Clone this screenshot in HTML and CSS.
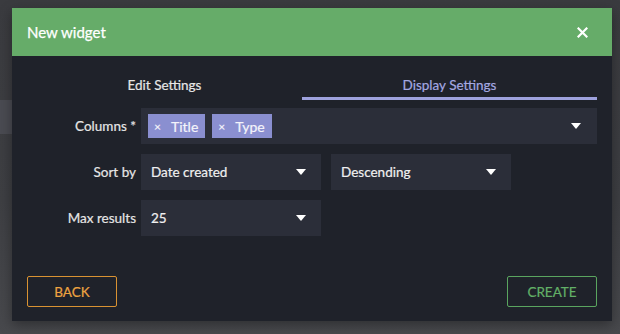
FILE: index.html
```html
<!DOCTYPE html>
<html>
<head>
<meta charset="utf-8">
<link rel="stylesheet" href="styles.css">
</head>
<body>
<div class="backdrop">
  <div class="band"></div>
</div>
<div class="modal">
  <div class="header">
    <span class="title">New widget</span>
    <svg class="close" width="11" height="11" viewBox="0 0 11 11"><path d="M1.5 1.5 L9.5 9.5 M9.5 1.5 L1.5 9.5" stroke="#fff" stroke-width="2.2" stroke-linecap="square"/></svg>
  </div>
  <div class="tabs">
    <div class="tab">Edit Settings</div>
    <div class="tab active">Display Settings</div>
  </div>
  <div class="form">
    <div class="row">
      <label class="label">Columns *</label>
      <div class="field wide">
        <div class="chips">
          <span class="chip"><span class="x">×</span>Title</span>
          <span class="chip"><span class="x">×</span>Type</span>
        </div>
        <span class="caret"></span>
      </div>
    </div>
    <div class="row">
      <label class="label">Sort by</label>
      <div class="field sel"><span>Date created</span><span class="caret"></span></div>
      <div class="field sel"><span>Descending</span><span class="caret"></span></div>
    </div>
    <div class="row">
      <label class="label">Max results</label>
      <div class="field sel"><span>25</span><span class="caret"></span></div>
    </div>
  </div>
  <div class="footer">
    <button class="btn back">BACK</button>
    <button class="btn create">CREATE</button>
  </div>
</div>
</body>
</html>
```
FILE: styles.css
```css
* { box-sizing: border-box; }
html, body { margin: 0; padding: 0; }
body {
  width: 620px;
  height: 334px;
  overflow: hidden;
  background: linear-gradient(#3a3b3f 0%, #3e3f43 60%, #48494d 100%);
  font-family: "Lato", "Liberation Sans", sans-serif;
  position: relative;
  -webkit-font-smoothing: antialiased;
}
.backdrop { position: absolute; inset: 0; }
.band {
  position: absolute;
  left: 0; top: 100px; width: 20px; height: 34px;
  background: #4a4b52;
}
.modal {
  position: absolute;
  left: 12px; top: 8px;
  width: 600px; height: 313px;
  background: #1f222a;
  display: flex;
  flex-direction: column;
  box-shadow: 0 4px 12px rgba(0,0,0,0.35);
}
.header {
  height: 48px;
  background: #66ac69;
  display: flex;
  align-items: center;
  justify-content: space-between;
  padding: 0 24px 0 15px;
}
.title { color: #fff; font-size: 15px; -webkit-text-stroke: 0.25px #fff; }
.close { display: block; }
.tabs {
  display: grid;
  grid-template-columns: 275px 1fr;
  margin: 0 15px;
  height: 44px;
}
.tab {
  text-align: center;
  color: #e6e6e6;
  font-size: 13.5px;
  padding-top: 21px;
  -webkit-text-stroke: 0.2px currentColor;
}
.tab.active {
  color: #a4a8e2;
  border-bottom: 3px solid #9ea2dd;
}
.form {
  display: flex;
  flex-direction: column;
  gap: 10px;
  padding: 8px 15px 0 0;
}
.row {
  display: flex;
  gap: 5px;
  height: 36px;
  align-items: stretch;
}
.label {
  width: 124px;
  text-align: right;
  color: #e6e6e6;
  font-size: 13.5px;
  display: flex;
  align-items: center;
  justify-content: flex-end;
  -webkit-text-stroke: 0.2px currentColor;
}
.field {
  background: #2b2e39;
  display: flex;
  align-items: center;
  justify-content: space-between;
  color: #f0f0f0;
  font-size: 13.5px;
  -webkit-text-stroke: 0.2px currentColor;
}
.wide { flex: 1; padding: 0 16px 0 7px; }
.sel { width: 180px; padding: 0 15px 0 10px; }
.row .sel + .sel { margin-left: 5px; }
.chips { display: flex; gap: 7px; }
.chip {
  background: #8a8fd0;
  color: #f4f4fb;
  height: 24px;
  display: flex;
  align-items: center;
  padding: 0 7px 0 6px;
  font-size: 14px;
}
.chip .x { font-size: 12px; margin-right: 10px; }
.caret {
  width: 0; height: 0;
  border-left: 5px solid transparent;
  border-right: 5px solid transparent;
  border-top: 6px solid #fff;
}
.footer {
  margin-top: auto;
  display: flex;
  justify-content: space-between;
  padding: 0 15px 14px 15px;
}
.btn {
  width: 90px;
  height: 31px;
  background: transparent;
  border-radius: 2px;
  font-family: inherit;
  font-size: 13.5px;
  cursor: pointer;
  -webkit-text-stroke: 0.2px currentColor;
}
.back { border: 1px solid #d99232; color: #eda441; }
.create { border: 1px solid #5aa55f; color: #62b067; }
```
